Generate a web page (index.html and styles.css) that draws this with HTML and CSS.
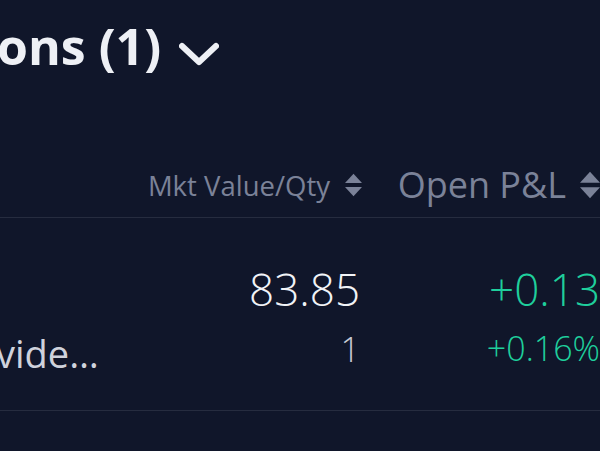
FILE: index.html
```html
<!DOCTYPE html>
<html lang="en">
<head>
  <meta charset="UTF-8" />
  <meta name="viewport" content="width=device-width, initial-scale=1.0" />
  <title>Positions</title>
  <link rel="stylesheet" href="styles.css">
</head>
<body>
  <section class="positions">
    <header class="section-head">
      <h2 class="section-title">ons (1)</h2>
      <svg class="chevron" width="40" height="24" viewBox="0 0 40 24" aria-hidden="true">
        <path d="M3 4 L20 20 L37 4" />
      </svg>
    </header>

    <div class="table">
      <div class="row head-row">
        <div class="cell"></div>
        <div class="cell col-mkt">
          <span>Mkt Value/Qty</span>
          <svg class="sort small" viewBox="0 0 18 24" aria-hidden="true">
            <path d="M9 0 L18 10 L0 10 Z" />
            <path d="M0 14 L18 14 L9 24 Z" />
          </svg>
        </div>
        <div class="cell col-pnl">
          <span>Open P&amp;L</span>
          <svg class="sort big" viewBox="0 0 18 24" aria-hidden="true">
            <path d="M9 0 L18 10 L0 10 Z" />
            <path d="M0 14 L18 14 L9 24 Z" />
          </svg>
        </div>
      </div>

      <div class="row body-row">
        <div class="cell name-cell">
          <span class="desc">vide…</span>
        </div>
        <div class="cell value-cell">
          <span class="mkt-value">83.85</span>
          <span class="qty">1</span>
        </div>
        <div class="cell value-cell pnl-cell">
          <span class="pnl">+0.13</span>
          <span class="pnl-pct">+0.16%</span>
        </div>
      </div>
    </div>
  </section>
</body>
</html>
```

FILE: styles.css
```css
body {
  margin: 0;
  background: #10162a;
  font-family: 'Open Sans', 'Noto Sans', sans-serif;
  overflow: hidden;
}

.positions {
  width: 600px;
}

.section-head {
  display: flex;
  align-items: flex-start;
  gap: 18px;
  padding-top: 12px;
  margin-left: -3px;
}

.section-title {
  margin: 0;
  font-size: 50px;
  font-weight: 700;
  line-height: 1.36;
  color: #eef0f5;
}

.chevron {
  display: block;
  margin-top: 30px;
}

.chevron path {
  fill: none;
  stroke: #eef0f5;
  stroke-width: 6;
  stroke-linecap: round;
  stroke-linejoin: round;
}

.table {
  margin-top: 87px;
}

.row {
  display: grid;
  grid-template-columns: 1fr 224px 238px;
  border-bottom: 1px solid #262c3f;
}

.head-row {
  align-items: end;
  padding-bottom: 14px;
}

.head-row .cell {
  display: flex;
  align-items: center;
  justify-content: flex-end;
  color: #7b8298;
  line-height: 1;
}

.col-mkt {
  font-size: 27.5px;
  gap: 15px;
  padding-bottom: 4px;
}

.col-pnl {
  font-size: 36px;
  gap: 14px;
}

.sort {
  display: block;
  fill: #7b8298;
}

.sort.small {
  width: 17px;
  height: 24px;
}

.sort.big {
  width: 20px;
  height: 28px;
}

.body-row {
  height: 192px;
}

.cell {
  min-width: 0;
}

.value-cell {
  display: flex;
  flex-direction: column;
  align-items: flex-end;
  padding-top: 49px;
  line-height: 1;
  font-weight: 350;
}

.mkt-value {
  font-size: 44px;
  color: #f1f3f7;
  margin-right: 2px;
}

.qty {
  margin-top: 21px;
  margin-right: 2px;
  font-size: 34px;
  color: #c7cad4;
}

.pnl-cell {
  padding-top: 49px;
}

.pnl {
  font-size: 44px;
  color: #1fcf9c;
}

.pnl-pct {
  margin-top: 20px;
  font-size: 34px;
  color: #1fcf9c;
}

.name-cell {
  padding-top: 116px;
  margin-left: -4px;
  line-height: 1;
}

.desc {
  font-size: 38px;
  color: #cfd2dc;
}
```
